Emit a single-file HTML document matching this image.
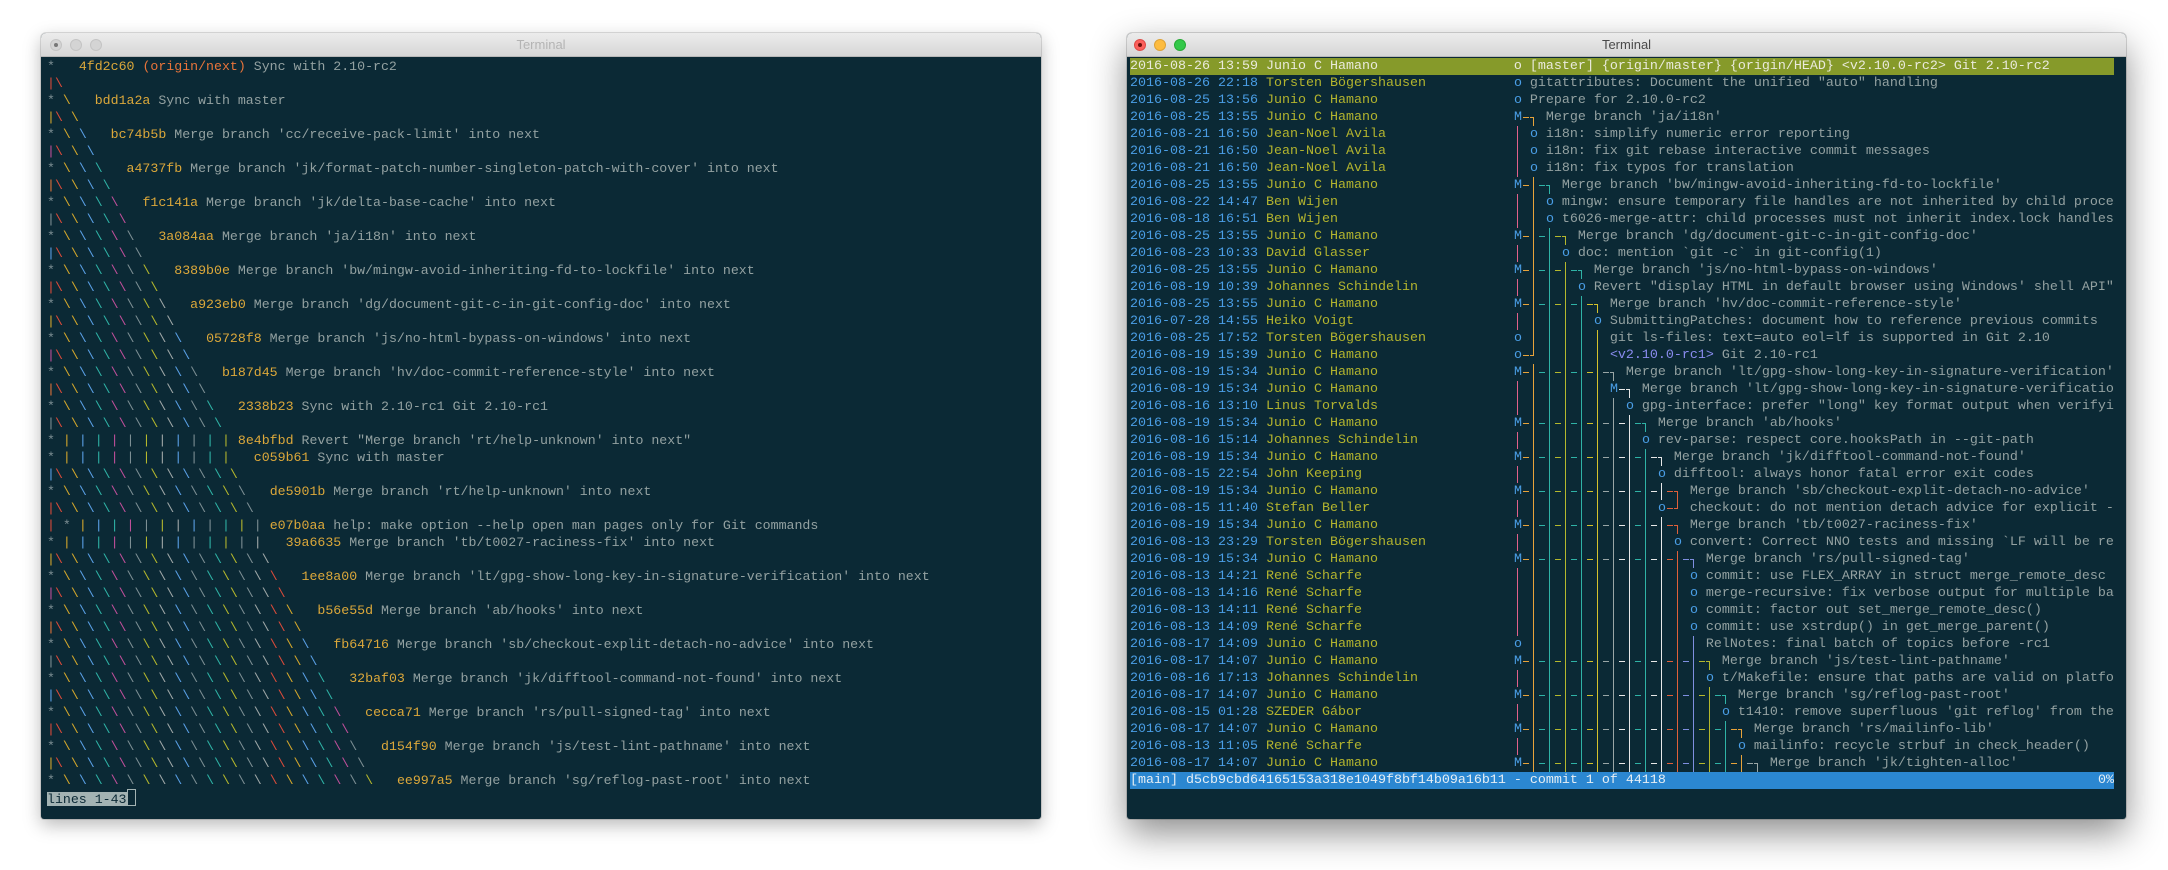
<!DOCTYPE html>
<html><head><meta charset="utf-8">
<style>
html,body{margin:0;padding:0;background:#fff;width:2168px;height:870px;overflow:hidden}
.win{position:absolute;top:33px;height:786px;background:#0b2935;border-radius:5px 5px 3px 3px;overflow:hidden}
#lw{left:41px;width:1000px;box-shadow:0 6px 18px rgba(0,0,0,.28),0 0 0 1px rgba(0,0,0,.12)}
#rw{left:1127px;width:999px;box-shadow:0 14px 36px rgba(0,0,0,.45),0 0 0 1px rgba(0,0,0,.15)}
.tb{position:absolute;left:0;top:0;right:0;height:23px;background:linear-gradient(#ececec,#d6d6d6);border-bottom:1px solid #b8b8b8;font:13px "Liberation Sans",sans-serif;text-align:center;line-height:23px}
.dot{position:absolute;top:6px;width:12px;height:12px;border-radius:50%;box-sizing:border-box}
.term{position:absolute;top:25px;font-family:"Liberation Mono","DejaVu Sans Mono",monospace;line-height:17px;white-space:pre;color:#93a1a1}
#lt{left:6px;font-size:13.25px}
#rt{left:3px;font-size:13.33px;width:985px;overflow:hidden}
.r{height:17px;overflow:hidden}
.g{display:inline-block;width:8px;height:17px;vertical-align:top}
</style></head><body>
<div class="win" id="lw">
 <div class="tb" style="color:#b4b4b4">Terminal
  <div class="dot" style="left:9px;background:#d4d4d4;border:1px solid #c4c4c4"><div style="width:4px;height:4px;border-radius:50%;background:#777;margin:3px"></div></div>
  <div class="dot" style="left:29px;background:#d4d4d4;border:1px solid #c4c4c4"></div>
  <div class="dot" style="left:49px;background:#d4d4d4;border:1px solid #c4c4c4"></div>
 </div>
 <div class="term" id="lt"></div>
</div>
<div class="win" id="rw">
 <div class="tb" style="color:#4a4a4a">Terminal
  <div class="dot" style="left:7px;background:#fc605c;border:1px solid #de4a45"><div style="width:4px;height:4px;border-radius:50%;background:#6d0f0c;margin:3px"></div></div>
  <div class="dot" style="left:27px;background:#fdbc40;border:1px solid #dea236"></div>
  <div class="dot" style="left:47px;background:#34c84a;border:1px solid #27aa35"></div>
 </div>
 <div class="term" id="rt"></div>
</div>
<script>
function esc(s){return s.replace(/&/g,'&amp;').replace(/</g,'&lt;').replace(/>/g,'&gt;');}
function sp(c,t){return '<span style="color:'+c+'">'+esc(t)+'</span>';}
var P=['#dc4b3a','#d4a72c','#5aa0e6','#2fb3a6','#c04f9a','#7d8f94','#b5b82d','#a0a8a8','#5aa0e6','#7d8f94','#2fb3a6','#b5b82d','#7d8f94','#a0a8a8'];
var FIRST=['#dc4b3a','#d4a72c','#c04f9a','#e0743a','#7d8f94','#5aa0e6'];
var HC='#dca83a',ST='#7d8f94';
var L=[],gi=0;
function slashes(k,ch){var s='';for(var i=1;i<=k;i++)s+=' '+sp(P[i%P.length],ch);return s;}
function commit(k,h,m,ref){var s=sp(ST,'*')+slashes(k,'\\')+'   '+sp(HC,h)+' ';if(ref)s+=sp('#e8743a',ref)+' ';return s+esc(m);}
function graph(k){var c=FIRST[gi++%FIRST.length];return sp(c,'|')+sp(P[0],'\\')+slashes(k,'\\');}
function bars(pre,n,h,m,extra){var s=pre;for(var i=1;i<=n;i++)s+=sp(P[i%P.length],'|')+' ';return s+extra+sp(HC,h)+' '+esc(m);}
var C=[['4fd2c60','Sync with 2.10-rc2','(origin/next)'],['bdd1a2a','Sync with master'],['bc74b5b',"Merge branch 'cc/receive-pack-limit' into next"],['a4737fb',"Merge branch 'jk/format-patch-number-singleton-patch-with-cover' into next"],['f1c141a',"Merge branch 'jk/delta-base-cache' into next"],['3a084aa',"Merge branch 'ja/i18n' into next"],['8389b0e',"Merge branch 'bw/mingw-avoid-inheriting-fd-to-lockfile' into next"],['a923eb0',"Merge branch 'dg/document-git-c-in-git-config-doc' into next"],['05728f8',"Merge branch 'js/no-html-bypass-on-windows' into next"],['b187d45',"Merge branch 'hv/doc-commit-reference-style' into next"],['2338b23','Sync with 2.10-rc1 Git 2.10-rc1']];
for(var k=0;k<C.length;k++){L.push(commit(k,C[k][0],C[k][1],C[k][2]));L.push(graph(k));}
L.push(bars(sp(ST,'*')+' ',11,'8e4bfbd','Revert "Merge branch \'rt/help-unknown\' into next"',''));
L.push(bars(sp(ST,'*')+' ',11,'c059b61','Sync with master','  '));
L.push(graph(11));
L.push(commit(12,'de5901b',"Merge branch 'rt/help-unknown' into next"));
L.push(graph(12));
L.push(bars(sp('#dc4b3a','|')+' '+sp(ST,'*')+' ',12,'e07b0aa','help: make option --help open man pages only for Git commands',''));
L.push(bars(sp(ST,'*')+' ',13,'39a6635',"Merge branch 'tb/t0027-raciness-fix' into next",'  '));
L.push(graph(13));
var D=[['1ee8a00',"Merge branch 'lt/gpg-show-long-key-in-signature-verification' into next"],['b56e55d',"Merge branch 'ab/hooks' into next"],['fb64716',"Merge branch 'sb/checkout-explit-detach-no-advice' into next"],['32baf03',"Merge branch 'jk/difftool-command-not-found' into next"],['cecca71',"Merge branch 'rs/pull-signed-tag' into next"],['d154f90',"Merge branch 'js/test-lint-pathname' into next"],['ee997a5',"Merge branch 'sg/reflog-past-root' into next"]];
for(var j=0;j<D.length;j++){L.push(commit(14+j,D[j][0],D[j][1]));if(j<D.length-1)L.push(graph(14+j));}
L.push('<span style="background:#a3b3b3;color:#0b2935">lines 1-43</span><span style="display:inline-block;width:7px;height:15px;border:1px solid #a3b3b3;vertical-align:-3px"></span>');
document.getElementById('lt').innerHTML=L.map(function(x){return '<div class="r">'+x+'</div>';}).join('');

/* right */
var LC=['#e0608a','#e8a33a','#2fb3a6','#b5b82d','#2fb3a6','#d4c22c','#9aa6a6','#e8e8e8','#2fb3a6','#e8e8e8','#e0603a','#7f8fe0','#b5b82d','#2fb3a6','#e8a33a','#9aa6a6'];
function m(n){var s='M';for(var i=1;i<n;i++)s+='─│';return s+'─┐';}
function c(n){var s='';for(var i=0;i<n;i++)s+='│ ';return s+'o';}
var R=[
['2016-08-26 13:59','Junio C Hamano','o','[master] {origin/master} {origin/HEAD} <v2.10.0-rc2> Git 2.10-rc2',50],
['2016-08-26 22:18','Torsten Bögershausen','o','gitattributes: Document the unified "auto" handling',50],
['2016-08-25 13:56','Junio C Hamano','o','Prepare for 2.10.0-rc2',50],
['2016-08-25 13:55','Junio C Hamano',m(1),"Merge branch 'ja/i18n'",52],
['2016-08-21 16:50','Jean-Noel Avila',c(1),'i18n: simplify numeric error reporting',52],
['2016-08-21 16:50','Jean-Noel Avila',c(1),'i18n: fix git rebase interactive commit messages',52],
['2016-08-21 16:50','Jean-Noel Avila',c(1),'i18n: fix typos for translation',52],
['2016-08-25 13:55','Junio C Hamano',m(2),"Merge branch 'bw/mingw-avoid-inheriting-fd-to-lockfile'",54],
['2016-08-22 14:47','Ben Wijen',c(2),'mingw: ensure temporary file handles are not inherited by child processes',54],
['2016-08-18 16:51','Ben Wijen',c(2),'t6026-merge-attr: child processes must not inherit index.lock handles',54],
['2016-08-25 13:55','Junio C Hamano',m(3),"Merge branch 'dg/document-git-c-in-git-config-doc'",56],
['2016-08-23 10:33','David Glasser',c(3),'doc: mention `git -c` in git-config(1)',56],
['2016-08-25 13:55','Junio C Hamano',m(4),"Merge branch 'js/no-html-bypass-on-windows'",58],
['2016-08-19 10:39','Johannes Schindelin',c(4),'Revert "display HTML in default browser using Windows\' shell API"',58],
['2016-08-25 13:55','Junio C Hamano',m(5),"Merge branch 'hv/doc-commit-reference-style'",60],
['2016-07-28 14:55','Heiko Voigt',c(5),'SubmittingPatches: document how to reference previous commits',60],
['2016-08-25 17:52','Torsten Bögershausen','o │ │ │ │ │','git ls-files: text=auto eol=lf is supported in Git 2.10',60],
['2016-08-19 15:39','Junio C Hamano','o─┘ │ │ │ │','Git 2.10-rc1',60,'<v2.10.0-rc1> '],
['2016-08-19 15:34','Junio C Hamano',m(6),"Merge branch 'lt/gpg-show-long-key-in-signature-verification'",62],
['2016-08-19 15:34','Junio C Hamano','│ │ │ │ │ │ M─┐',"Merge branch 'lt/gpg-show-long-key-in-signature-verification' into maint",64],
['2016-08-16 13:10','Linus Torvalds',c(7),'gpg-interface: prefer "long" key format output when verifying pgp signatures',64],
['2016-08-19 15:34','Junio C Hamano',m(8),"Merge branch 'ab/hooks'",66],
['2016-08-16 15:14','Johannes Schindelin',c(8),'rev-parse: respect core.hooksPath in --git-path',66],
['2016-08-19 15:34','Junio C Hamano',m(9),"Merge branch 'jk/difftool-command-not-found'",68],
['2016-08-15 22:54','John Keeping',c(9),'difftool: always honor fatal error exit codes',68],
['2016-08-19 15:34','Junio C Hamano',m(10),"Merge branch 'sb/checkout-explit-detach-no-advice'",70],
['2016-08-15 11:40','Stefan Beller','│ │ │ │ │ │ │ │ │ o─┘','checkout: do not mention detach advice for explicit --detach option',70],
['2016-08-19 15:34','Junio C Hamano',m(10),"Merge branch 'tb/t0027-raciness-fix'",70],
['2016-08-13 23:29','Torsten Bögershausen',c(10),'convert: Correct NNO tests and missing `LF will be replaced by CRLF`',70],
['2016-08-19 15:34','Junio C Hamano',m(11),"Merge branch 'rs/pull-signed-tag'",72],
['2016-08-13 14:21','René Scharfe',c(11),'commit: use FLEX_ARRAY in struct merge_remote_desc',72],
['2016-08-13 14:16','René Scharfe',c(11),'merge-recursive: fix verbose output for multiple base trees',72],
['2016-08-13 14:11','René Scharfe',c(11),'commit: factor out set_merge_remote_desc()',72],
['2016-08-13 14:09','René Scharfe',c(11),'commit: use xstrdup() in get_merge_parent()',72],
['2016-08-17 14:09','Junio C Hamano','o │ │ │ │ │ │ │ │ │ │ │','RelNotes: final batch of topics before -rc1',72],
['2016-08-17 14:07','Junio C Hamano',m(12),"Merge branch 'js/test-lint-pathname'",74],
['2016-08-16 17:13','Johannes Schindelin',c(12),'t/Makefile: ensure that paths are valid on platforms we care',74],
['2016-08-17 14:07','Junio C Hamano',m(13),"Merge branch 'sg/reflog-past-root'",76],
['2016-08-15 01:28','SZEDER Gábor',c(13),"t1410: remove superfluous 'git reflog' from the test",76],
['2016-08-17 14:07','Junio C Hamano',m(14),"Merge branch 'rs/mailinfo-lib'",78],
['2016-08-13 11:05','René Scharfe',c(14),'mailinfo: recycle strbuf in check_header()',78],
['2016-08-17 14:07','Junio C Hamano',m(15),"Merge branch 'jk/tighten-alloc'",80]
];
function pad(s,n){while(s.length<n)s+=' ';return s;}
function lg(c,x,y,w,h){return 'linear-gradient('+c+','+c+') no-repeat '+x+'px '+y+'px/'+w+'px '+h+'px';}
function cell(ch,col){
  var bg='';
  if(ch=='│')bg=lg(col,3,0,1,17);
  else if(ch=='─')bg=lg(col,1,8,6,1);
  else if(ch=='┐')bg=lg(col,0,8,4,1)+','+lg(col,3,8,1,9);
  else if(ch=='┘')bg=lg(col,0,8,4,1)+','+lg(col,3,0,1,9);
  return '<span class="g" style="background:'+bg+'"></span>';
}
var H=[];
R.forEach(function(r,i){
  var g=pad(r[2],r[4]-48), gs='';
  if(i==0){
    H.push('<div class="r" style="background:#869a2a;color:#eaeadc;width:984px">'+esc(r[0]+' '+pad(r[1],31)+g+r[3])+'</div>');return;
  }
  for(var p=0;p<g.length;p++){var ch=g[p];
    if(ch=='M'||ch=='o')gs+=sp('#4a9ee6',ch);
    else if(ch==' ')gs+=' ';
    else gs+=cell(ch,LC[Math.floor((p+(ch=='─'?1:0))/2)%LC.length]);}
  var msg=(r[5]?sp('#8a8cf0',r[5]):'')+esc(r[3]);
  H.push('<div class="r">'+sp('#4a9ee6',r[0])+' '+sp('#b3b42e',pad(r[1],31))+gs+msg+'</div>');
});
H.push('<div class="r" style="background:#2b87d1;color:#e6eef4;width:984px;position:relative">'+esc('[main] d5cb9cbd64165153a318e1049f8bf14b09a16b11 - commit 1 of 44118')+'<span style="position:absolute;right:0">0%</span></div>');
document.getElementById('rt').innerHTML=H.join('');
</script>
</body></html>
